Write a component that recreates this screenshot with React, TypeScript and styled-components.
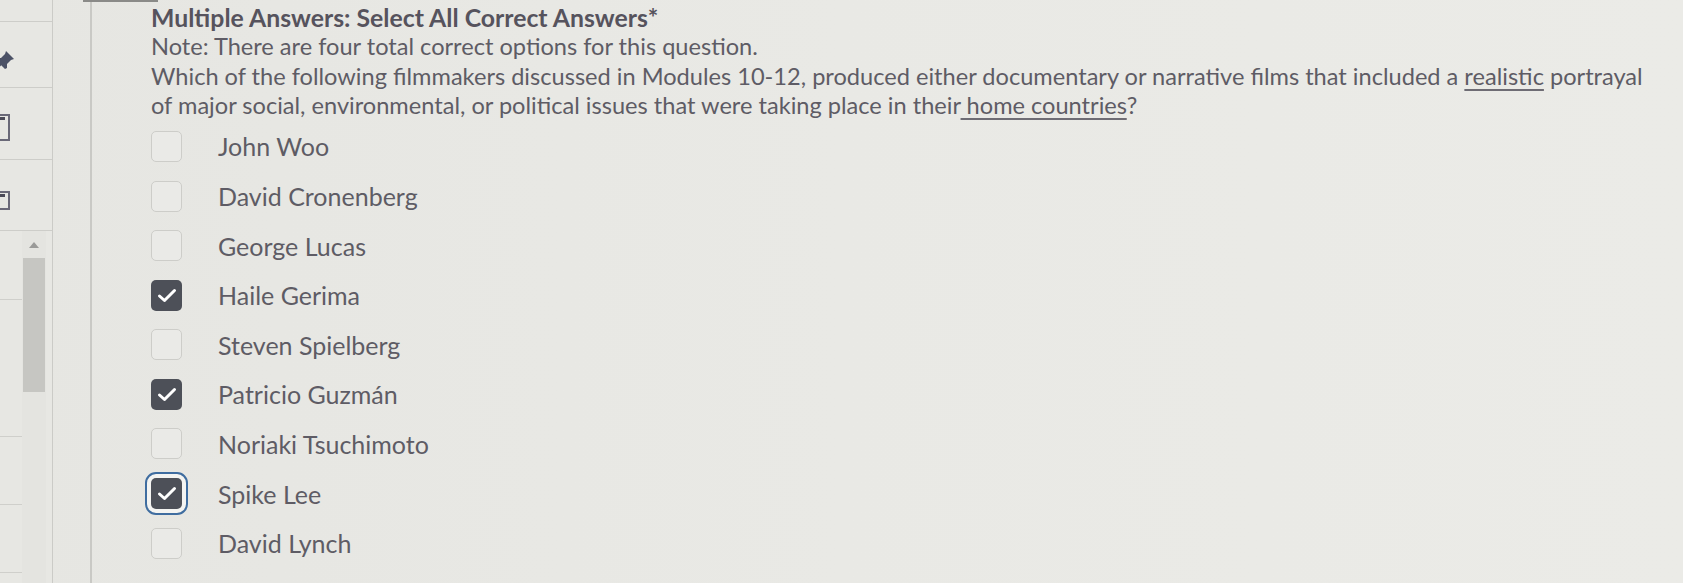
import React from "react";
import styled, { createGlobalStyle } from "styled-components";

const Global = createGlobalStyle`
  *, *::before, *::after { box-sizing: border-box; }
  html, body { margin: 0; padding: 0; }
  body {
    background: #e8e8e4;
    font-family: Lato, "Open Sans", sans-serif;
    overflow: hidden;
  }
`;

const Page = styled.div`
  display: grid;
  grid-template-columns: 53px 39px 1fr;
  width: 1683px;
  height: 583px;
  position: relative;
  background: linear-gradient(90deg, #e6e6e2 0%, #e9e9e5 50%, #ebebe7 100%);
`;

const Sidebar = styled.aside`
  display: flex;
  flex-direction: column;
  border-right: 1px solid #cbcbc7;
  background: #e7e7e3;
`;

const SideRow = styled.div<{ $h: number }>`
  height: ${(p) => p.$h}px;
  flex: none;
  border-bottom: 1px solid #cdcdc9;
  display: flex;
  align-items: center;
  overflow: hidden;
`;

const ScrollArea = styled.div`
  flex: 1;
  display: flex;
  min-height: 0;
`;

const ListCol = styled.div`
  width: 22px;
  display: flex;
  flex-direction: column;
`;

const ListRow = styled.div<{ $h: number }>`
  height: ${(p) => p.$h}px;
  flex: none;
  border-bottom: 1px solid #cfcfcb;
`;

const Track = styled.div`
  width: 24px;
  display: flex;
  flex-direction: column;
  align-items: stretch;
  background: #e4e4e0;
`;

const Arrow = styled.div`
  height: 27px;
  display: flex;
  align-items: center;
  justify-content: center;
`;

const Thumb = styled.div`
  height: 134px;
  margin: 0 1px;
  background: #c6c6c2;
`;

const Gutter = styled.div`
  border-right: 2px solid #c9c9c5;
`;

const TopTab = styled.div`
  position: absolute;
  left: 83px;
  top: 0;
  width: 75px;
  height: 2px;
  background: #8a8a88;
`;

const Content = styled.main`
  padding: 3px 14px 0 59px;
  color: #5e5c65;
`;

const Question = styled.div`
  font-size: 23.6px;
  line-height: 29.4px;
`;

const Title = styled.div`
  font-weight: 700;
  font-size: 24.8px;
  color: #56535d;
`;

const U = styled.span`
  text-decoration: underline;
  text-decoration-thickness: 2px;
  text-underline-offset: 4px;
  text-decoration-color: #6e6c74;
`;

const Options = styled.ul`
  list-style: none;
  margin: 1px 0 0;
  padding: 0;
`;

const Option = styled.li`
  height: 49.6px;
  display: flex;
  align-items: center;
  gap: 36px;
  font-size: 25px;
  color: #5e5c65;
`;

const Box = styled.span<{ $checked?: boolean; $focus?: boolean }>`
  width: 31px;
  height: 31px;
  flex: none;
  border-radius: 5px;
  display: flex;
  align-items: center;
  justify-content: center;
  background: ${(p) => (p.$checked ? "#4d5058" : "#eaeae7")};
  border: ${(p) => (p.$checked ? "none" : "1.5px solid #cdcdc9")};
  outline: ${(p) => (p.$focus ? "2.5px solid #3f6da0" : "none")};
  outline-offset: 4px;
  box-shadow: ${(p) => (p.$focus ? "0 0 0 4px #f4f4f2" : "none")};
`;

const Check = () => (
  <svg width="20" height="15" viewBox="0 0 20 15" fill="none">
    <path d="M2.5 8 L7.5 12.5 L17.5 2.5" stroke="#ffffff" strokeWidth="3" strokeLinecap="round" strokeLinejoin="round" />
  </svg>
);

const Pin = () => (
  <svg width="22" height="22" viewBox="0 0 22 22" style={{ marginLeft: -6, marginTop: 10 }}>
    <path d="M12 2 L20 10 L17 11 L13 15 L13 19 L11 20 L2 11 L3 9 L7 9 L11 5 Z" fill="#4c5266" />
    <path d="M7 15 L1 21" stroke="#4c5266" strokeWidth="2" />
  </svg>
);

const SquareIcon = ({ h, y }: { h: number; y: number }) => (
  <svg width="12" height={h + 2} viewBox={`0 0 12 ${h + 2}`} style={{ marginLeft: -1, marginTop: y }}>
    <rect x="0" y="1" width="10" height={h} fill="none" stroke="#6a6978" strokeWidth="2" />
    <rect x="0" y="3" width="6" height="3" fill="#4c4b58" />
  </svg>
);

const options: { label: string; checked?: boolean; focus?: boolean }[] = [
  { label: "John Woo" },
  { label: "David Cronenberg" },
  { label: "George Lucas" },
  { label: "Haile Gerima", checked: true },
  { label: "Steven Spielberg" },
  { label: "Patricio Guzmán", checked: true },
  { label: "Noriaki Tsuchimoto" },
  { label: "Spike Lee", checked: true, focus: true },
  { label: "David Lynch" },
];

export default function App() {
  return (
    <>
      <Global />
      <Page>
        <Sidebar>
          <SideRow $h={22} />
          <SideRow $h={66}>
            <Pin />
          </SideRow>
          <SideRow $h={72}>
            <SquareIcon h={25} y={8} />
          </SideRow>
          <SideRow $h={71}>
            <SquareIcon h={17} y={10} />
          </SideRow>
          <ScrollArea>
            <ListCol>
              <ListRow $h={69} />
              <ListRow $h={137} />
              <ListRow $h={68} />
              <ListRow $h={68} />
            </ListCol>
            <Track>
              <Arrow>
                <svg width="10" height="6" viewBox="0 0 10 6">
                  <path d="M0 6 L5 0 L10 6 Z" fill="#9a9a98" />
                </svg>
              </Arrow>
              <Thumb />
            </Track>
          </ScrollArea>
        </Sidebar>
        <Gutter />
        <Content>
          <Question>
            <Title>Multiple Answers: Select All Correct Answers*</Title>
            <div>Note: There are four total correct options for this question.</div>
            <div>
              Which of the following filmmakers discussed in Modules 10-12, produced either documentary or narrative
              films that included a <U>realistic</U> portrayal of major social, environmental, or political issues that
              were taking place in their<U> home countries</U>?
            </div>
          </Question>
          <Options>
            {options.map((o) => (
              <Option key={o.label}>
                <Box $checked={o.checked} $focus={o.focus}>
                  {o.checked && <Check />}
                </Box>
                <span>{o.label}</span>
              </Option>
            ))}
          </Options>
        </Content>
        <TopTab />
      </Page>
    </>
  );
}
